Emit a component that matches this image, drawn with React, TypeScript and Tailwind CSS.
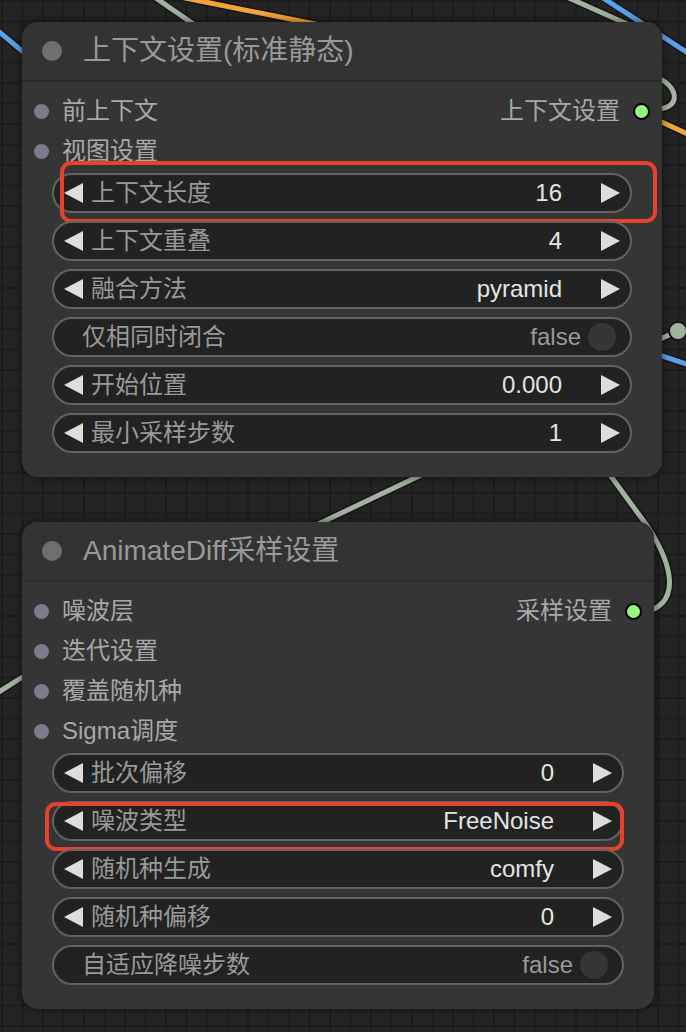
import React from 'react';

type Widget =
  | { kind: 'num'; label: string; value: string }
  | { kind: 'toggle'; label: string; value: string };

interface NodeProps {
  title: string;
  inputs: string[];
  output: string;
  widgets: Widget[];
  width: string;
  highlight: number;
  highlightClass: string;
}

const FONT = "font-['Liberation_Sans','Noto_Sans_CJK_SC',sans-serif]";

function Arrow({ dir }: { dir: 'left' | 'right' }) {
  return (
    <svg width="19" height="20" viewBox="0 0 19 20" className="shrink-0">
      <polygon
        points={dir === 'left' ? '19,0 19,20 0,10' : '0,0 0,20 19,10'}
        fill="#dddddd"
      />
    </svg>
  );
}

function WidgetRow({ w }: { w: Widget }) {
  if (w.kind === 'toggle') {
    return (
      <div className="flex items-center h-[40px] rounded-full border-2 border-[#626262] bg-[#222222] pl-[28px] pr-[14px]">
        <span className="text-[#999999]">{w.label}</span>
        <div className="flex-1" />
        <span className="text-[#999999]">{w.value}</span>
        <span className="ml-[7px] w-[28px] h-[28px] rounded-full bg-[#363636]" />
      </div>
    );
  }
  return (
    <div className="flex items-center h-[40px] rounded-full border-2 border-[#626262] bg-[#222222] px-[10px]">
      <Arrow dir="left" />
      <span className="ml-[8px] text-[#999999]">{w.label}</span>
      <div className="flex-1" />
      <span className="mr-[39px] text-[#e4e4e4]">{w.value}</span>
      <Arrow dir="right" />
    </div>
  );
}

function Node({ title, inputs, output, widgets, width, highlight, highlightClass }: NodeProps) {
  return (
    <div
      className={`${width} rounded-[16px] bg-[#353535] shadow-[0_0_10px_rgba(0,0,0,0.55)] text-[24px] leading-none`}
    >
      <div className="flex items-center h-[60px] pl-[20px] rounded-t-[16px] bg-[#333333] border-b-2 border-[#2b2b2b]">
        <span className="w-[20px] h-[20px] rounded-full bg-[#6f6f6f]" />
        <span className="ml-[21px] text-[28px] text-[#999999]">{title}</span>
      </div>
      <div className="pt-[9px] pb-[24px]">
        {inputs.map((name, i) => (
          <div key={name} className="flex items-center h-[40px] pl-[12px] pr-[12px]">
            <span className="w-[15px] h-[15px] rounded-full bg-[#7b7b8f]" />
            <span className="ml-[13px] text-[#a8a8a8]">{name}</span>
            <div className="flex-1" />
            {i === 0 && (
              <>
                <span className="text-[#a8a8a8]">{output}</span>
                <span className="ml-[13px] w-[17px] h-[17px] rounded-full bg-[#96f67f] border-2 border-black" />
              </>
            )}
          </div>
        ))}
        <div className="mt-[2px] flex flex-col gap-[8px] px-[30px]">
          {widgets.map((w, i) => (
            <div key={w.label} className="relative">
              <WidgetRow w={w} />
              {i === highlight && (
                <span
                  className={`absolute ${highlightClass} border-4 border-[#e8402b] rounded-[11px] pointer-events-none`}
                />
              )}
            </div>
          ))}
        </div>
      </div>
    </div>
  );
}

function Wires() {
  return (
    <svg className="absolute inset-0" width="686" height="1032" viewBox="0 0 686 1032" fill="none">
      <g strokeLinecap="round">
        {/* dark outlines */}
        <g stroke="#151515" strokeWidth="8">
          <path d="M -10 24 L 40 66" />
          <path d="M 150 -6 L 205 32" />
          <path d="M 180 -3 L 335 28" />
          <path d="M 560 -6 L 645 32" />
          <path d="M 600 -4 L 705 64" />
          <path d="M 640 72 C 684 80, 684 114, 650 108" />
          <path d="M 640 112 L 705 142" />
          <path d="M 705 318 L 678 331 L 640 348" />
          <path d="M 650 352 L 705 370" />
          <path d="M 268 548 L 440 466" />
          <path d="M 602 464 L 648 527 C 672 564, 684 606, 640 613" />
          <path d="M -6 695 L 40 666" />
        </g>
        <g stroke="#5aa0ea" strokeWidth="5">
          <path d="M -10 24 L 40 66" />
          <path d="M 600 -4 L 705 64" />
          <path d="M 650 352 L 705 370" />
        </g>
        <g stroke="#f2a53a" strokeWidth="5">
          <path d="M 180 -3 L 335 28" />
          <path d="M 640 112 L 705 142" />
        </g>
        <g stroke="#a3b2a0" strokeWidth="5">
          <path d="M 150 -6 L 205 32" />
          <path d="M 560 -6 L 645 32" />
          <path d="M 640 72 C 684 80, 684 114, 650 108" />
          <path d="M 705 318 L 678 331 L 640 348" />
          <path d="M 268 548 L 440 466" />
          <path d="M 602 464 L 648 527 C 672 564, 684 606, 640 613" />
          <path d="M -6 695 L 40 666" />
        </g>
        <circle cx="678" cy="331" r="9" fill="#a3b2a0" stroke="#151515" strokeWidth="2" />
      </g>
    </svg>
  );
}

export default function App() {
  return (
    <div
      className={`relative w-[686px] h-[1032px] overflow-hidden bg-[#242424] bg-[linear-gradient(#1c1c1c_2px,transparent_2px),linear-gradient(90deg,#1c1c1c_2px,transparent_2px)] bg-[size:20.5px_20.5px] bg-[position:1px_0px] ${FONT}`}
    >
      <Wires />
      <div className="relative flex flex-col gap-[45px] pt-[22px] pl-[22px]">
        <Node
          title="上下文设置(标准静态)"
          inputs={['前上下文', '视图设置']}
          output="上下文设置"
          width="w-[640px]"
          highlight={0}
          highlightClass="left-[8px] -right-[25px] -top-[12px] -bottom-[10px]"
          widgets={[
            { kind: 'num', label: '上下文长度', value: '16' },
            { kind: 'num', label: '上下文重叠', value: '4' },
            { kind: 'num', label: '融合方法', value: 'pyramid' },
            { kind: 'toggle', label: '仅相同时闭合', value: 'false' },
            { kind: 'num', label: '开始位置', value: '0.000' },
            { kind: 'num', label: '最小采样步数', value: '1' },
          ]}
        />
        <Node
          title="AnimateDiff采样设置"
          inputs={['噪波层', '迭代设置', '覆盖随机种', 'Sigma调度']}
          output="采样设置"
          width="w-[632px]"
          highlight={1}
          highlightClass="-left-[7px] right-0 top-[1px] -bottom-[10px]"
          widgets={[
            { kind: 'num', label: '批次偏移', value: '0' },
            { kind: 'num', label: '噪波类型', value: 'FreeNoise' },
            { kind: 'num', label: '随机种生成', value: 'comfy' },
            { kind: 'num', label: '随机种偏移', value: '0' },
            { kind: 'toggle', label: '自适应降噪步数', value: 'false' },
          ]}
        />
      </div>
    </div>
  );
}
